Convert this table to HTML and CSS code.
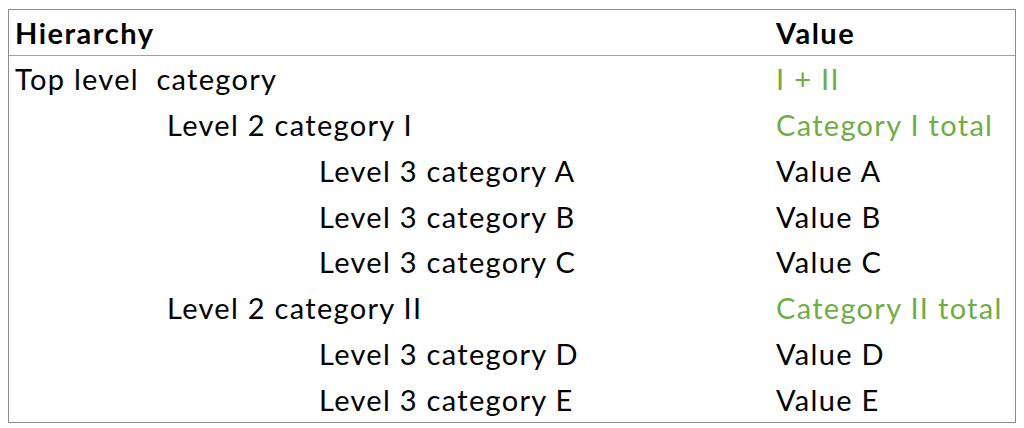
FILE: index.html
```html
<!DOCTYPE html>
<html>
<head>
<meta charset="utf-8">
<link rel="stylesheet" href="styles.css">
</head>
<body>
<div class="table">
  <div class="row head">
    <div class="cell">Hierarchy</div>
    <div class="cell val">Value</div>
  </div>
  <div class="body">
    <div class="row">
      <div class="cell l1">Top level  category</div>
      <div class="cell val green">I + II</div>
    </div>
    <div class="row">
      <div class="cell l2">Level 2 category I</div>
      <div class="cell val green">Category I total</div>
    </div>
    <div class="row">
      <div class="cell l3">Level 3 category A</div>
      <div class="cell val">Value A</div>
    </div>
    <div class="row">
      <div class="cell l3">Level 3 category B</div>
      <div class="cell val">Value B</div>
    </div>
    <div class="row">
      <div class="cell l3">Level 3 category C</div>
      <div class="cell val">Value C</div>
    </div>
    <div class="row">
      <div class="cell l2">Level 2 category II</div>
      <div class="cell val green">Category II total</div>
    </div>
    <div class="row">
      <div class="cell l3">Level 3 category D</div>
      <div class="cell val">Value D</div>
    </div>
    <div class="row">
      <div class="cell l3">Level 3 category E</div>
      <div class="cell val">Value E</div>
    </div>
  </div>
</div>
</body>
</html>
```

FILE: styles.css
```css
html, body {
  margin: 0;
  padding: 0;
  background: #ffffff;
}
body {
  padding: 9px 0 0 8px;
  font-family: Lato, "Open Sans", sans-serif;
  color: #000;
}
.table {
  width: 1006px;
  border: 1px solid #8c8c8c;
}
.row {
  display: grid;
  grid-template-columns: 761px 1fr;
  height: 45.75px;
  align-items: center;
}
.head {
  height: 45px;
  border-bottom: 1px solid #a0a0a0;
  font-weight: bold;
}
.head .cell {
  letter-spacing: 1.5px;
}
.cell {
  padding-left: 6px;
  font-size: 29px;
  letter-spacing: 1.3px;
  white-space: pre;
  line-height: 1;
}
.l2 { padding-left: 158px; }
.l3 { padding-left: 310px; }
.green { color: #70ad47; }
```
